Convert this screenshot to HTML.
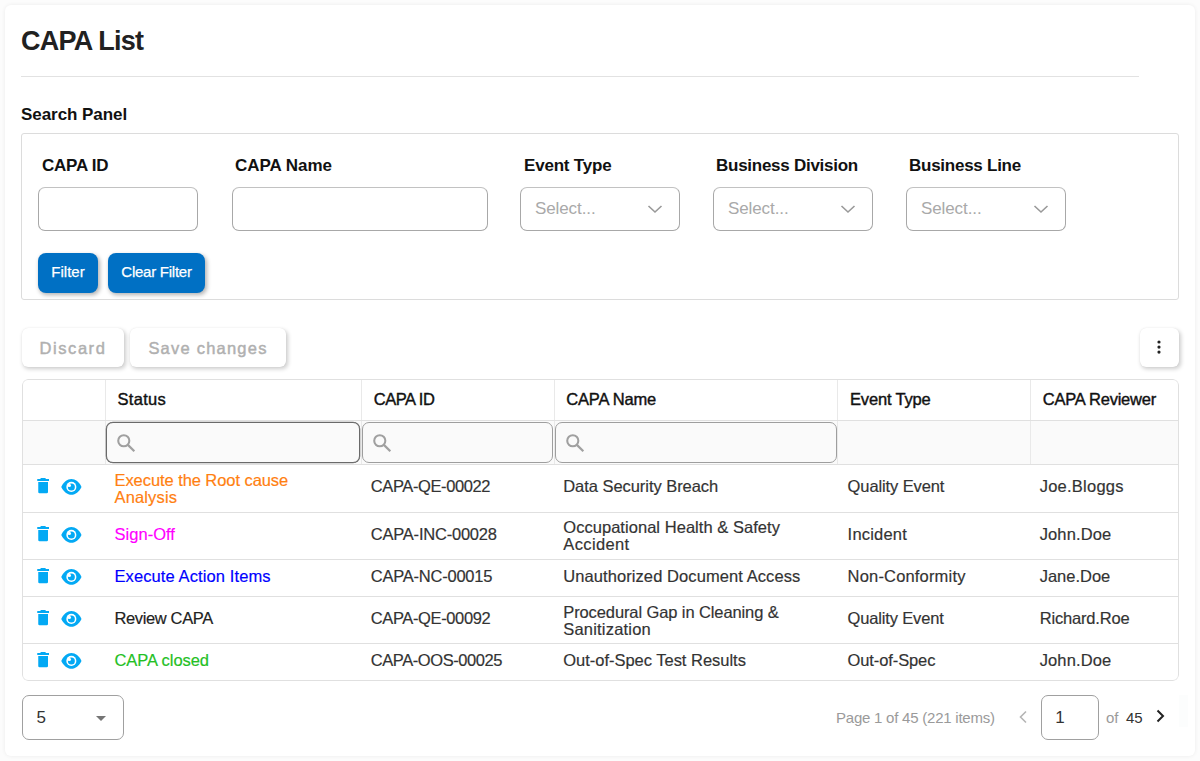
<!DOCTYPE html>
<html lang="en">
<head>
<meta charset="utf-8">
<title>CAPA List</title>
<style>
*{box-sizing:border-box;margin:0;padding:0}
html,body{width:1200px;height:761px;overflow:hidden}
body{background:#fcfcfc;font-family:"Liberation Sans",sans-serif;color:#333;font-size:16px;position:relative}
.card{position:absolute;left:5px;top:5px;width:1190px;height:751px;background:#fff;border-radius:6px;box-shadow:0 0 4px rgba(0,0,0,.07)}
.abs{position:absolute}
h1{position:absolute;left:21px;top:23.5px;font-size:27px;line-height:34px;font-weight:700;color:#212121;letter-spacing:-.75px;white-space:nowrap}
.hr{position:absolute;left:21px;top:76px;width:1118px;height:1px;background:#e2e2e2}
.sp-title{position:absolute;left:21px;top:105px;font-size:17px;line-height:20px;font-weight:700;color:#111;letter-spacing:-.05px;white-space:nowrap}
.panel{position:absolute;left:21px;top:133px;width:1158px;height:167px;border:1px solid #dcdcdc;border-radius:3px;background:#fff}
.lbl{position:absolute;top:155.500px;font-size:17px;line-height:20px;font-weight:700;color:#111;white-space:nowrap}
.inp{position:absolute;top:187px;height:44px;border:1px solid #a8a8a8;border-top-color:#c2c2c2;border-radius:7px;background:#fff}
.sel .ph{position:absolute;left:14px;top:10.500px;font-size:17px;line-height:20px;color:#a9a9a9;letter-spacing:-.1px}
.sel svg{position:absolute;right:16px;top:13.5px}
.btn{position:absolute;top:253px;height:40px;border-radius:8px;background:#0070c4;color:#fff;font-size:15px;line-height:38px;text-align:center;box-shadow:1.5px 2px 4px rgba(0,0,0,.3);-webkit-text-stroke:.25px #fff}
.tbtn{position:absolute;top:328px;height:39px;-webkit-text-stroke:.45px #b0b0b0;border-radius:6px;background:#fff;color:#b0b0b0;font-size:16.5px;line-height:40px;text-align:center;letter-spacing:1.22px;box-shadow:1.5px 2px 4px rgba(0,0,0,.2),0 0 1px rgba(0,0,0,.1)}
.grid{position:absolute;left:22px;top:379px;width:1157px;height:302px;border-radius:6px;overflow:hidden;background:#fff}
.grid .hd{position:absolute;top:0;height:41px;line-height:40px;font-size:16.5px;font-weight:400;color:#111;white-space:nowrap;-webkit-text-stroke:.4px #111}
.grid .frow{position:absolute;left:0;top:42px;width:100%;height:43px;background:#fafafa}
.grid .vl{position:absolute;top:0;width:1px;height:85px;background:#e9e9e9}
.grid .hl{position:absolute;left:0;width:100%;height:1px;background:#e0e0e0}
.grid .fi{position:absolute;top:43px;height:41px;border:1px solid #9e9e9e;border-radius:7px;background:#fafafa}
.grid .fi1{border-color:#6a6a6a;box-shadow:0 0 0 .3px #777}
.grid .mg{position:absolute;left:8.800px;top:9.800px}
.grid .row{position:absolute;left:0;width:100%}
.grid .c{position:absolute;top:0;height:100%;display:flex;align-items:center;font-size:16.5px;line-height:17px;padding-bottom:3.400px;white-space:nowrap;-webkit-text-stroke:.18px}
.grid .c.two{padding-bottom:0}
.grid .ic{position:absolute;top:50%}
.grid .gb{position:absolute;left:0;top:0;width:100%;height:100%;border:1px solid #e0e0e0;border-radius:6px;pointer-events:none}
.pg{position:absolute;top:707.500px;font-size:15px;line-height:20px;white-space:nowrap}
</style>
</head>
<body>
<div class="card"></div>
<h1>CAPA List</h1>
<div class="hr"></div>
<div class="sp-title">Search Panel</div>
<div class="panel"></div>
<div class="lbl" style="left:42px;letter-spacing:-0.238px">CAPA ID</div>
<div class="lbl" style="left:235px;letter-spacing:-0.029px">CAPA Name</div>
<div class="lbl" style="left:524px;letter-spacing:-0.193px">Event Type</div>
<div class="lbl" style="left:716px;letter-spacing:-0.265px">Business Division</div>
<div class="lbl" style="left:909px;letter-spacing:-0.255px">Business Line</div>
<div class="inp" style="left:38px;width:160px"></div>
<div class="inp" style="left:232px;width:256px"></div>
<div class="inp sel" style="left:520px;width:160px"><span class="ph">Select...</span><svg width="16" height="14" viewBox="0 0 16 14"><path d="M1.5 4 L8 10 L14.5 4" fill="none" stroke="#999" stroke-width="1.6"/></svg></div>
<div class="inp sel" style="left:713px;width:160px"><span class="ph">Select...</span><svg width="16" height="14" viewBox="0 0 16 14"><path d="M1.5 4 L8 10 L14.5 4" fill="none" stroke="#999" stroke-width="1.6"/></svg></div>
<div class="inp sel" style="left:906px;width:160px"><span class="ph">Select...</span><svg width="16" height="14" viewBox="0 0 16 14"><path d="M1.5 4 L8 10 L14.5 4" fill="none" stroke="#999" stroke-width="1.6"/></svg></div>
<div class="btn" style="left:38px;width:60px">Filter</div>
<div class="btn" style="left:108px;width:97px;letter-spacing:-.25px">Clear Filter</div>
<div class="tbtn" style="left:22px;width:102px;letter-spacing:1.56px">Discard</div>
<div class="tbtn" style="left:130px;width:156px">Save changes</div>
<div class="tbtn" style="left:1140px;width:38.5px"><svg width="4" height="14" viewBox="0 0 4 14" style="position:absolute;left:16.800px;top:12.300px"><circle cx="2" cy="2" r="1.600" fill="#222"/><circle cx="2" cy="7.050" r="1.600" fill="#222"/><circle cx="2" cy="12.100" r="1.600" fill="#222"/></svg></div>
<div class="grid">
<div class="frow"></div>
<div class="hd" style="left:95.5px;letter-spacing:0.305px">Status</div>
<div class="hd" style="left:351.75px;letter-spacing:-0.457px">CAPA ID</div>
<div class="hd" style="left:544.25px;letter-spacing:-0.188px">CAPA Name</div>
<div class="hd" style="left:828px;letter-spacing:-0.172px">Event Type</div>
<div class="hd" style="left:1020.8px;letter-spacing:-0.23px">CAPA Reviewer</div>
<div class="vl" style="left:83px"></div>
<div class="vl" style="left:339px"></div>
<div class="vl" style="left:532px"></div>
<div class="vl" style="left:815px"></div>
<div class="vl" style="left:1008px"></div>
<div class="hl" style="top:41px"></div>
<div class="fi fi1" style="left:84px;width:254px"><svg class="mg" width="20" height="20" viewBox="0 0 18 18"><circle cx="7" cy="7" r="5" fill="none" stroke="#a0a0a0" stroke-width="1.85"/><path d="M10.700 10.700 L16.500 16.500" stroke="#a0a0a0" stroke-width="2" fill="none"/></svg></div>
<div class="fi" style="left:340px;width:191px"><svg class="mg" width="20" height="20" viewBox="0 0 18 18"><circle cx="7" cy="7" r="5" fill="none" stroke="#a0a0a0" stroke-width="1.85"/><path d="M10.700 10.700 L16.500 16.500" stroke="#a0a0a0" stroke-width="2" fill="none"/></svg></div>
<div class="fi" style="left:533px;width:282px"><svg class="mg" width="20" height="20" viewBox="0 0 18 18"><circle cx="7" cy="7" r="5" fill="none" stroke="#a0a0a0" stroke-width="1.85"/><path d="M10.700 10.700 L16.500 16.500" stroke="#a0a0a0" stroke-width="2" fill="none"/></svg></div>
<div class="hl" style="top:85px"></div>
<div class="row" style="top:86px;height:47px">
<svg class="ic" style="left:15px;margin-top:-10.3px" width="12" height="16" viewBox="0 0 12 16"><path d="M4.200 0h3.800a.8.800 0 0 1 .8.800V1H12v2H.250V1H3.400V.800a.8.800 0 0 1 .8-.800zM1.250 3.900H11V14a1.300 1.300 0 0 1-1.300 1.300H2.550A1.300 1.300 0 0 1 1.250 14z" fill="#03a9f4"/></svg><svg class="ic" style="left:39.400px;margin-top:-9.500px" width="21" height="16" viewBox="0 0 21 16"><path d="M.25 7.900C2.700 3 6.300.1 10.400.1S18.100 3 20.500 7.900C18.100 12.800 14.500 15.700 10.400 15.700S2.700 12.800.25 7.900z" fill="#03a9f4"/><circle cx="10.350" cy="7.900" r="5.050" fill="#fff"/><circle cx="10.350" cy="7.900" r="3.500" fill="#03a9f4"/><circle cx="8.300" cy="6.400" r="1.700" fill="#fff"/></svg>
<div class="c two" style="left:92.5px;color:#ff8010"><div><span style="letter-spacing:-0.071px">Execute the Root cause</span><br><span style="letter-spacing:0.15px">Analysis</span></div></div>
<div class="c" style="left:348.75px"><div><span style="letter-spacing:-0.393px">CAPA-QE-00022</span></div></div>
<div class="c" style="left:541.25px"><div><span style="letter-spacing:-0.05px">Data Security Breach</span></div></div>
<div class="c" style="left:825.6px"><div><span style="letter-spacing:-0.111px">Quality Event</span></div></div>
<div class="c" style="left:1017.7px"><div><span style="letter-spacing:0.24px">Joe.Bloggs</span></div></div>
</div>
<div class="hl" style="top:133px"></div>
<div class="row" style="top:134px;height:46px">
<svg class="ic" style="left:15px;margin-top:-10.3px" width="12" height="16" viewBox="0 0 12 16"><path d="M4.200 0h3.800a.8.800 0 0 1 .8.800V1H12v2H.250V1H3.400V.800a.8.800 0 0 1 .8-.800zM1.250 3.900H11V14a1.300 1.300 0 0 1-1.300 1.300H2.550A1.300 1.300 0 0 1 1.250 14z" fill="#03a9f4"/></svg><svg class="ic" style="left:39.400px;margin-top:-9.500px" width="21" height="16" viewBox="0 0 21 16"><path d="M.25 7.900C2.700 3 6.300.1 10.400.1S18.100 3 20.500 7.900C18.100 12.800 14.500 15.700 10.400 15.700S2.700 12.800.25 7.900z" fill="#03a9f4"/><circle cx="10.350" cy="7.900" r="5.050" fill="#fff"/><circle cx="10.350" cy="7.900" r="3.500" fill="#03a9f4"/><circle cx="8.300" cy="6.400" r="1.700" fill="#fff"/></svg>
<div class="c" style="left:92.5px;color:#ff00ff"><div><span style="letter-spacing:0.032px">Sign-Off</span></div></div>
<div class="c" style="left:348.75px"><div><span style="letter-spacing:-0.215px">CAPA-INC-00028</span></div></div>
<div class="c two" style="left:541.25px"><div><span style="letter-spacing:0.043px">Occupational Health &amp; Safety</span><br><span style="letter-spacing:0.381px">Accident</span></div></div>
<div class="c" style="left:825.6px"><div><span style="letter-spacing:0.201px">Incident</span></div></div>
<div class="c" style="left:1017.7px"><div><span style="letter-spacing:0.124px">John.Doe</span></div></div>
</div>
<div class="hl" style="top:180px"></div>
<div class="row" style="top:181px;height:36px">
<svg class="ic" style="left:15px;margin-top:-10.3px" width="12" height="16" viewBox="0 0 12 16"><path d="M4.200 0h3.800a.8.800 0 0 1 .8.800V1H12v2H.250V1H3.400V.800a.8.800 0 0 1 .8-.800zM1.250 3.900H11V14a1.300 1.300 0 0 1-1.300 1.300H2.550A1.300 1.300 0 0 1 1.250 14z" fill="#03a9f4"/></svg><svg class="ic" style="left:39.400px;margin-top:-9.500px" width="21" height="16" viewBox="0 0 21 16"><path d="M.25 7.900C2.700 3 6.300.1 10.400.1S18.100 3 20.500 7.900C18.100 12.800 14.500 15.700 10.400 15.700S2.700 12.800.25 7.900z" fill="#03a9f4"/><circle cx="10.350" cy="7.900" r="5.050" fill="#fff"/><circle cx="10.350" cy="7.900" r="3.500" fill="#03a9f4"/><circle cx="8.300" cy="6.400" r="1.700" fill="#fff"/></svg>
<div class="c" style="left:92.5px;color:#0000ff"><div><span style="letter-spacing:0.103px">Execute Action Items</span></div></div>
<div class="c" style="left:348.75px"><div><span style="letter-spacing:-0.226px">CAPA-NC-00015</span></div></div>
<div class="c" style="left:541.25px"><div><span style="letter-spacing:0.083px">Unauthorized Document Access</span></div></div>
<div class="c" style="left:825.6px"><div><span style="letter-spacing:0.174px">Non-Conformity</span></div></div>
<div class="c" style="left:1017.7px"><div><span style="letter-spacing:-0.005px">Jane.Doe</span></div></div>
</div>
<div class="hl" style="top:217px"></div>
<div class="row" style="top:218px;height:46px">
<svg class="ic" style="left:15px;margin-top:-10.3px" width="12" height="16" viewBox="0 0 12 16"><path d="M4.200 0h3.800a.8.800 0 0 1 .8.800V1H12v2H.250V1H3.400V.800a.8.800 0 0 1 .8-.800zM1.250 3.900H11V14a1.300 1.300 0 0 1-1.300 1.300H2.550A1.300 1.300 0 0 1 1.250 14z" fill="#03a9f4"/></svg><svg class="ic" style="left:39.400px;margin-top:-9.500px" width="21" height="16" viewBox="0 0 21 16"><path d="M.25 7.900C2.700 3 6.300.1 10.400.1S18.100 3 20.500 7.900C18.100 12.800 14.500 15.700 10.400 15.700S2.700 12.800.25 7.900z" fill="#03a9f4"/><circle cx="10.350" cy="7.900" r="5.050" fill="#fff"/><circle cx="10.350" cy="7.900" r="3.500" fill="#03a9f4"/><circle cx="8.300" cy="6.400" r="1.700" fill="#fff"/></svg>
<div class="c" style="left:92.5px;color:#222"><div><span style="letter-spacing:-0.369px">Review CAPA</span></div></div>
<div class="c" style="left:348.75px"><div><span style="letter-spacing:-0.372px">CAPA-QE-00092</span></div></div>
<div class="c two" style="left:541.25px;padding-top:2.5px"><div><span style="letter-spacing:-0.105px">Procedural Gap in Cleaning &amp;</span><br><span style="letter-spacing:0.195px">Sanitization</span></div></div>
<div class="c" style="left:825.6px"><div><span style="letter-spacing:-0.161px">Quality Event</span></div></div>
<div class="c" style="left:1017.7px"><div><span style="letter-spacing:-0.171px">Richard.Roe</span></div></div>
</div>
<div class="hl" style="top:264px"></div>
<div class="row" style="top:265px;height:36px">
<svg class="ic" style="left:15px;margin-top:-10.3px" width="12" height="16" viewBox="0 0 12 16"><path d="M4.200 0h3.800a.8.800 0 0 1 .8.800V1H12v2H.250V1H3.400V.800a.8.800 0 0 1 .8-.800zM1.250 3.900H11V14a1.300 1.300 0 0 1-1.300 1.300H2.550A1.300 1.300 0 0 1 1.250 14z" fill="#03a9f4"/></svg><svg class="ic" style="left:39.400px;margin-top:-9.500px" width="21" height="16" viewBox="0 0 21 16"><path d="M.25 7.900C2.700 3 6.300.1 10.400.1S18.100 3 20.500 7.900C18.100 12.800 14.500 15.700 10.400 15.700S2.700 12.800.25 7.900z" fill="#03a9f4"/><circle cx="10.350" cy="7.900" r="5.050" fill="#fff"/><circle cx="10.350" cy="7.900" r="3.500" fill="#03a9f4"/><circle cx="8.300" cy="6.400" r="1.700" fill="#fff"/></svg>
<div class="c" style="left:92.5px;color:#24c024"><div><span style="letter-spacing:-0.054px">CAPA closed</span></div></div>
<div class="c" style="left:348.75px"><div><span style="letter-spacing:-0.427px">CAPA-OOS-00025</span></div></div>
<div class="c" style="left:541.25px"><div><span style="letter-spacing:-0.02px">Out-of-Spec Test Results</span></div></div>
<div class="c" style="left:825.6px"><div><span style="letter-spacing:-0.115px">Out-of-Spec</span></div></div>
<div class="c" style="left:1017.7px"><div><span style="letter-spacing:0.124px">John.Doe</span></div></div>
</div>
<div class="gb"></div>
</div>
<div class="inp" style="left:22px;top:695px;width:102px;height:45px;border-color:#a0a0a0;border-radius:7px"><span style="position:absolute;left:13.500px;top:11.700px;font-size:17px;line-height:20px;color:#333">5</span><svg width="10" height="5" viewBox="0 0 10 5" style="position:absolute;left:73.300px;top:20px"><path d="M0 0h10L5 5z" fill="#757575"/></svg></div>
<div class="abs" style="left:1179px;top:695px;width:9px;height:32px;background:#fcfdfd"></div>
<div class="pg" style="left:836px;color:#9a9a9a;letter-spacing:-.23px">Page 1 of 45 (221 items)</div>
<svg class="abs" style="left:1018px;top:710px" width="10" height="14" viewBox="0 0 10 14"><path d="M8 1.500 L2.500 7 L8 12.500" fill="none" stroke="#b5b5b5" stroke-width="1.6"/></svg>
<div class="inp" style="left:1041px;top:695px;width:58px;height:45px;border-color:#a0a0a0;border-radius:7px"><span style="position:absolute;left:13.300px;top:11.500px;font-size:17px;line-height:20px;color:#333">1</span></div>
<div class="pg" style="left:1106px;color:#9a9a9a">of</div>
<div class="pg" style="left:1126px;color:#333">45</div>
<svg class="abs" style="left:1155px;top:709px" width="10" height="14" viewBox="0 0 10 14"><path d="M2.500 1.500 L8 7 L2.500 12.500" fill="none" stroke="#222" stroke-width="2"/></svg>
</body>
</html>
